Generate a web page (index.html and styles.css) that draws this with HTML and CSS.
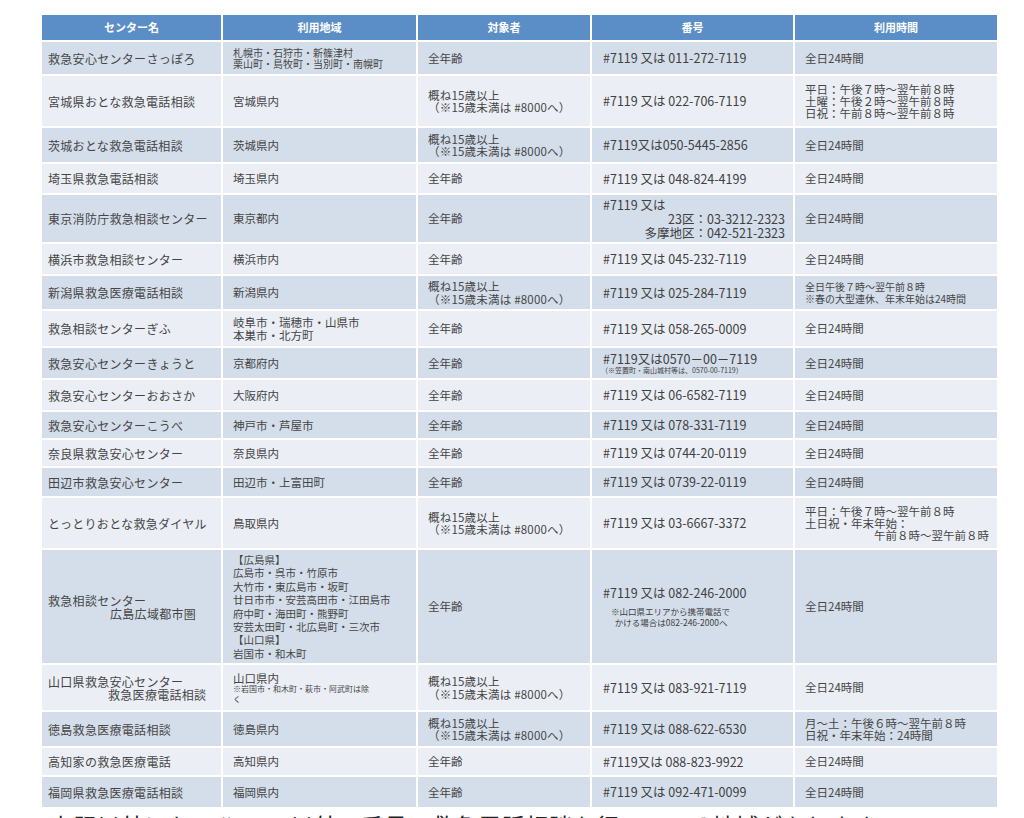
FILE: index.html
```html
<!DOCTYPE html>
<html lang="ja">
<head>
<meta charset="utf-8">
<title>救急電話相談 一覧</title>
<link rel="stylesheet" href="styles.css">
</head>
<body>
<div class="page">
  <div class="table">
    <div class="row head h25">
      <div class="cell c">センター名</div>
      <div class="cell c">利用地域</div>
      <div class="cell c">対象者</div>
      <div class="cell c">番号</div>
      <div class="cell c">利用時間</div>
    </div>

    <div class="row dark h32">
      <div class="cell name">救急安心センターさっぽろ</div>
      <div class="cell small">札幌市・石狩市・新篠津村<br>栗山町・島牧町・当別町・南幌町</div>
      <div class="cell">全年齢</div>
      <div class="cell num">#7119 又は 011-272-7119</div>
      <div class="cell">全日24時間</div>
    </div>

    <div class="row light h50">
      <div class="cell name">宮城県おとな救急電話相談</div>
      <div class="cell">宮城県内</div>
      <div class="cell tgt">概ね15歳以上<br>（※15歳未満は #8000へ）</div>
      <div class="cell num">#7119 又は 022-706-7119</div>
      <div class="cell tight">平日：午後７時～翌午前８時<br>土曜：午後２時～翌午前８時<br>日祝：午前８時～翌午前８時</div>
    </div>

    <div class="row dark h34">
      <div class="cell name">茨城おとな救急電話相談</div>
      <div class="cell">茨城県内</div>
      <div class="cell tgt">概ね15歳以上<br>（※15歳未満は #8000へ）</div>
      <div class="cell num">#7119又は050-5445-2856</div>
      <div class="cell">全日24時間</div>
    </div>

    <div class="row light h29">
      <div class="cell name">埼玉県救急電話相談</div>
      <div class="cell">埼玉県内</div>
      <div class="cell">全年齢</div>
      <div class="cell num">#7119 又は 048-824-4199</div>
      <div class="cell">全日24時間</div>
    </div>

    <div class="row dark h47">
      <div class="cell name">東京消防庁救急相談センター</div>
      <div class="cell">東京都内</div>
      <div class="cell">全年齢</div>
      <div class="cell num tokyo">
        <span>#7119 又は</span>
        <span class="r">23区：03-3212-2323</span>
        <span class="r">多摩地区：042-521-2323</span>
      </div>
      <div class="cell">全日24時間</div>
    </div>

    <div class="row light h30">
      <div class="cell name">横浜市救急相談センター</div>
      <div class="cell">横浜市内</div>
      <div class="cell">全年齢</div>
      <div class="cell num">#7119 又は 045-232-7119</div>
      <div class="cell">全日24時間</div>
    </div>

    <div class="row dark h33">
      <div class="cell name">新潟県救急医療電話相談</div>
      <div class="cell">新潟県内</div>
      <div class="cell tgt">概ね15歳以上<br>（※15歳未満は #8000へ）</div>
      <div class="cell num">#7119 又は 025-284-7119</div>
      <div class="cell small2">全日午後７時～翌午前８時<br>※春の大型連休、年末年始は24時間</div>
    </div>

    <div class="row light h35">
      <div class="cell name">救急相談センターぎふ</div>
      <div class="cell">岐阜市・瑞穂市・山県市<br>本巣市・北方町</div>
      <div class="cell">全年齢</div>
      <div class="cell num">#7119 又は 058-265-0009</div>
      <div class="cell">全日24時間</div>
    </div>

    <div class="row dark h30">
      <div class="cell name">救急安心センターきょうと</div>
      <div class="cell">京都府内</div>
      <div class="cell">全年齢</div>
      <div class="cell num kyoto">
        <span>#7119又は0570－00－7119</span>
        <span class="tiny">（※笠置町・南山城村等は、0570-00-7119）</span>
      </div>
      <div class="cell">全日24時間</div>
    </div>

    <div class="row light h30">
      <div class="cell name">救急安心センターおおさか</div>
      <div class="cell">大阪府内</div>
      <div class="cell">全年齢</div>
      <div class="cell num">#7119 又は 06-6582-7119</div>
      <div class="cell">全日24時間</div>
    </div>

    <div class="row dark h26">
      <div class="cell name">救急安心センターこうべ</div>
      <div class="cell">神戸市・芦屋市</div>
      <div class="cell">全年齢</div>
      <div class="cell num">#7119 又は 078-331-7119</div>
      <div class="cell">全日24時間</div>
    </div>

    <div class="row light h26">
      <div class="cell name">奈良県救急安心センター</div>
      <div class="cell">奈良県内</div>
      <div class="cell">全年齢</div>
      <div class="cell num">#7119 又は 0744-20-0119</div>
      <div class="cell">全日24時間</div>
    </div>

    <div class="row dark h28">
      <div class="cell name">田辺市救急安心センター</div>
      <div class="cell">田辺市・上富田町</div>
      <div class="cell">全年齢</div>
      <div class="cell num">#7119 又は 0739-22-0119</div>
      <div class="cell">全日24時間</div>
    </div>

    <div class="row light h50">
      <div class="cell name">とっとりおとな救急ダイヤル</div>
      <div class="cell">鳥取県内</div>
      <div class="cell tgt">概ね15歳以上<br>（※15歳未満は #8000へ）</div>
      <div class="cell num">#7119 又は 03-6667-3372</div>
      <div class="cell tight">
        <span>平日：午後７時～翌午前８時</span>
        <span>土日祝・年末年始：</span>
        <span class="r">午前８時～翌午前８時</span>
      </div>
    </div>

    <div class="row dark h113">
      <div class="cell name">
        <span>救急相談センター</span>
        <span class="indent">広島広域都市圏</span>
      </div>
      <div class="cell list">【広島県】<br>広島市・呉市・竹原市<br>大竹市・東広島市・坂町<br>廿日市市・安芸高田市・江田島市<br>府中町・海田町・熊野町<br>安芸太田町・北広島町・三次市<br>【山口県】<br>岩国市・和木町</div>
      <div class="cell">全年齢</div>
      <div class="cell num hiro">
        <span>#7119 又は 082-246-2000</span>
        <span class="note">※山口県エリアから携帯電話で<br>&nbsp;&nbsp;かける場合は082-246-2000へ</span>
      </div>
      <div class="cell">全日24時間</div>
    </div>

    <div class="row light h45">
      <div class="cell name">
        <span>山口県救急安心センター</span>
        <span class="indent2">救急医療電話相談</span>
      </div>
      <div class="cell yama">
        <span>山口県内</span>
        <span class="tiny2">※岩国市・和木町・萩市・阿武町は除<br>く</span>
      </div>
      <div class="cell tgt">概ね15歳以上<br>（※15歳未満は #8000へ）</div>
      <div class="cell num">#7119 又は 083-921-7119</div>
      <div class="cell">全日24時間</div>
    </div>

    <div class="row dark h34">
      <div class="cell name">徳島救急医療電話相談</div>
      <div class="cell">徳島県内</div>
      <div class="cell tgt">概ね15歳以上<br>（※15歳未満は #8000へ）</div>
      <div class="cell num">#7119 又は 088-622-6530</div>
      <div class="cell tight">月～土：午後６時～翌午前８時<br>日祝・年末年始：24時間</div>
    </div>

    <div class="row light h27">
      <div class="cell name">高知家の救急医療電話</div>
      <div class="cell">高知県内</div>
      <div class="cell">全年齢</div>
      <div class="cell num">#7119又は 088-823-9922</div>
      <div class="cell">全日24時間</div>
    </div>

    <div class="row dark h30">
      <div class="cell name">福岡県救急医療電話相談</div>
      <div class="cell">福岡県内</div>
      <div class="cell">全年齢</div>
      <div class="cell num">#7119 又は 092-471-0099</div>
      <div class="cell">全日24時間</div>
    </div>
  </div>
  <p class="footnote">上記以外にも、＃7119以外の番号で救急電話相談を行っている地域があります。</p>
</div>
</body>
</html>
```

FILE: styles.css
```css
html, body {
  margin: 0;
  padding: 0;
  background: #ffffff;
  height: 818px;
  overflow: hidden;
}

.page {
  padding: 15px 0 0 42px;
  font-family: "Noto Sans CJK JP", "Noto Sans", sans-serif;
  color: #454545;
}

.table {
  display: flex;
  flex-direction: column;
  gap: 2px;
  width: 955px;
}

.row {
  display: grid;
  grid-template-columns: 179px 193px 172px 201px 202px;
  column-gap: 2px;
}

.h25 { height: 25px; }
.h26 { height: 26px; }
.h27 { height: 27px; }
.h28 { height: 28px; }
.h29 { height: 29px; }
.h30 { height: 30px; }
.h32 { height: 32px; }
.h33 { height: 33px; }
.h34 { height: 34px; }
.h35 { height: 35px; }
.h45 { height: 45px; }
.h47 { height: 47px; }
.h50 { height: 50px; }
.h113 { height: 113px; }

.row.head .cell {
  background: #5b8ec6;
  color: #ffffff;
  font-weight: 700;
  font-size: 11px;
  justify-content: center;
  align-items: center;
  padding: 0;
}

.row.dark .cell { background: #d4deea; }
.row.light .cell { background: #ebeff5; }

.cell {
  display: flex;
  flex-direction: column;
  justify-content: center;
  padding-left: 10px;
  font-size: 11.5px;
  line-height: 13px;
  white-space: nowrap;
  overflow: hidden;
}

.cell.name {
  padding-left: 6px;
  font-size: 12px;
  letter-spacing: 0.3px;
}

.cell.name .indent { padding-left: 62px; }
.cell.name .indent2 { padding-left: 60px; }

.cell.small {
  font-size: 10px;
  line-height: 11.5px;
}

.cell.tgt {
  line-height: 12.5px;
  font-size: 11.5px;
}

.cell.tgt, .cell.tgt * { letter-spacing: 0.2px; }

.cell.num {
  font-size: 12.5px;
  padding-left: 11px;
  line-height: 14px;
  color: #404040;
}

.cell.tokyo {
  justify-content: flex-start;
  padding-top: 3px;
  padding-right: 8px;
  line-height: 14px;
}

.r { text-align: right; }

.cell.tight {
  font-size: 11.5px;
  line-height: 12px;
  padding-right: 8px;
}

.cell.small2 {
  font-size: 10px;
  line-height: 12px;
}

.cell.kyoto { line-height: 13px; }

.tiny {
  font-size: 7px;
  line-height: 10px;
  margin-left: -2px;
}

.cell.list {
  font-size: 10.5px;
  line-height: 13.4px;
}

.cell.hiro .note {
  font-size: 8.5px;
  line-height: 11px;
  padding-left: 8px;
  margin-top: 6px;
}

.cell.yama {
  line-height: 12px;
}

.tiny2 {
  font-size: 8px;
  line-height: 10px;
}

.footnote {
  margin: 5px 0 0 8px;
  font-size: 23px;
  line-height: 26px;
  color: #222222;
  letter-spacing: 0.5px;
  white-space: nowrap;
}
```
